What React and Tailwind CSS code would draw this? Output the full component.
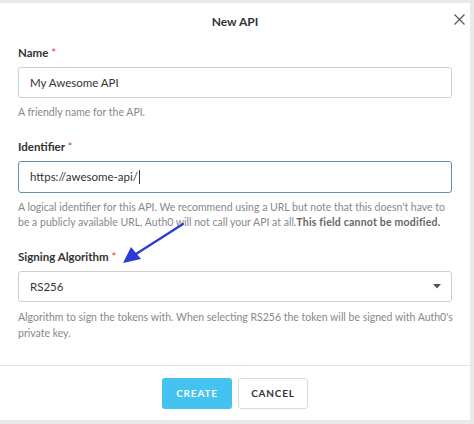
import React from "react";

function Label({ children }) {
  return (
    <div className="text-[11.5px] leading-[16px] font-bold text-[#333]">
      {children} <span className="text-[#e0443a] font-normal">*</span>
    </div>
  );
}

export default function App() {
  return (
    <div
      className="w-[474px] h-[424px] bg-[#e9e9e9] pt-[3px] pr-[4px] pb-[4px] relative"
      style={{ fontFamily: "Lato, 'Open Sans', sans-serif" }}
    >
      <div className="bg-white h-full flex flex-col">
        <div className="relative h-[37px] flex items-center justify-center">
          <span className="text-[12px] font-bold text-[#333]">New API</span>
          <button className="absolute right-[3px] top-[8px] w-[16px] h-[16px] flex items-center justify-center text-[#555]">
            <svg width="11" height="11" viewBox="0 0 11 11" fill="none" stroke="currentColor" strokeWidth="1.2">
              <path d="M0.5 0.5 L10.5 10.5 M10.5 0.5 L0.5 10.5" />
            </svg>
          </button>
        </div>
        <div className="px-[18px] flex-1 pt-[5px]">
          <Label>Name</Label>
          <div className="mt-[6px] h-[31px] border border-[#cfcfcf] rounded-[3px] flex items-center px-[11px] text-[11.5px] text-[#333]">
            My Awesome API
          </div>
          <div className="mt-[7px] text-[10.5px] leading-[15px] text-[#888]">
            A friendly name for the API.
          </div>

          <div className="mt-[19px]">
            <Label>Identifier</Label>
          </div>
          <div className="mt-[6px] h-[32px] border border-[#5f93ad] rounded-[3px] flex items-center px-[11px] text-[11.5px] text-[#333]">
            https://awesome-api/<span className="inline-block w-[1px] h-[14px] bg-[#333] ml-[1px]" />
          </div>
          <div className="mt-[7px] text-[10.5px] leading-[15px] text-[#888]">
            A logical identifier for this API. We recommend using a URL but note that this doesn't have to be a publicly available URL, Auth0 will not call your API at all.
            <span className="font-bold text-[#666] tracking-[0.02em]">This field cannot be modified.</span>
          </div>

          <div className="mt-[19px]">
            <Label>Signing Algorithm</Label>
          </div>
          <div className="mt-[6px] h-[31px] border border-[#cfcfcf] rounded-[3px] flex items-center justify-between pl-[11px] pr-[10px] text-[11.5px] text-[#333]">
            <span>RS256</span>
            <svg width="8" height="5" viewBox="0 0 8 5">
              <path d="M0 0 L8 0 L4 4.5 Z" fill="#555" />
            </svg>
          </div>
          <div className="mt-[7px] -mr-[12px] text-[10.5px] leading-[16px] text-[#888]">
            Algorithm to sign the tokens with. When selecting RS256 the token will be signed with Auth0's private key.
          </div>
        </div>
        <div className="border-t border-[#e3e3e3] h-[55px] flex items-center justify-center gap-[6px]">
          <button className="w-[70px] h-[31px] rounded-[3px] bg-[#44c2f0] text-white text-[10px] font-bold tracking-[0.08em]">
            CREATE
          </button>
          <button className="w-[70px] h-[31px] rounded-[3px] border border-[#d9d9d9] bg-white text-[#333] text-[10px] font-bold tracking-[0.08em]">
            CANCEL
          </button>
        </div>
      </div>
      <svg className="absolute left-0 top-0 pointer-events-none" width="474" height="424">
        <line x1="183" y1="224" x2="136" y2="254" stroke="#2a3ad8" strokeWidth="2.2" strokeLinecap="round" />
        <polygon points="123,263 131,247 141,259" fill="#2a3ad8" />
      </svg>
    </div>
  );
}
